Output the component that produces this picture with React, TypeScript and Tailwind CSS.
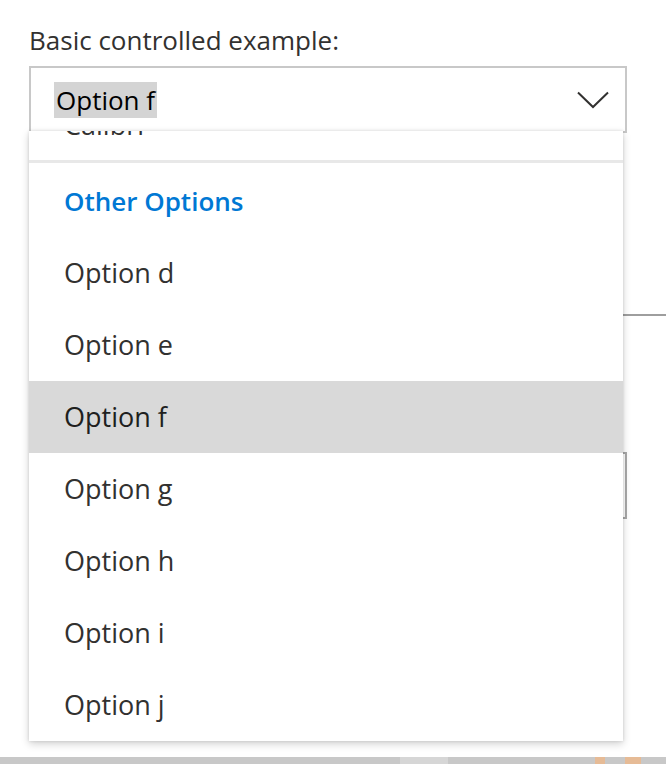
import { useState } from 'react';

const OPTIONS = ['Option d', 'Option e', 'Option f', 'Option g', 'Option h', 'Option i', 'Option j'];

export default function App() {
  const [selected, setSelected] = useState('Option f');

  return (
    <div className="relative h-[764px] w-full overflow-hidden bg-white font-['Open_Sans',sans-serif] text-[#323130]">
      {/* page underneath the callout */}
      <div className="px-[29px] pt-[22px]">
        <label className="block text-[26px] leading-[36px]">Basic controlled example:</label>
        <div className="mt-[8px] flex h-[67px] w-[598px] items-center justify-between border-2 border-[#c8c8c8] pl-[23px] pr-[16px]">
          <span className="bg-[#d4d4d4] px-[2px] text-[26px] leading-[36px] text-black">{selected}</span>
          <svg width="32" height="18" viewBox="0 0 32 18" fill="none">
            <polyline points="1,1.5 16,16 31,1.5" stroke="#323130" strokeWidth="2" />
          </svg>
        </div>
        <div className="-mr-[29px] mt-[181px] h-[2px] bg-[#9e9e9e]" />
        <div className="mt-[136px] h-[67px] w-[598px] border-2 border-[#a8a8a8]" />
        <div className="-mx-[29px] mt-[238px] flex h-[7px] bg-[#c8c8c8]">
          <div className="w-[400px]" />
          <div className="w-[48px] bg-[#d6d6d6]" />
          <div className="w-[147px]" />
          <div className="w-[10px] bg-[#e6bb96]" />
          <div className="w-[20px]" />
          <div className="w-[16px] bg-[#e6bb96]" />
        </div>
      </div>

      {/* dropdown callout */}
      <div className="absolute left-[29px] top-[131px] h-[610px] w-[594px] overflow-hidden bg-white shadow-[0_3px_8px_rgba(0,0,0,0.18),0_0_3px_rgba(0,0,0,0.12)]">
        <div className="-mt-[45px]">
          <div className="flex h-[72px] items-center pl-[35px] pt-[6px] text-[27px]">Calibri</div>
          <div className="my-[2px] h-[3px] bg-[#e8e8e8]" />
          <div className="flex h-[72px] items-center pl-[35px] text-[26px] font-semibold text-[#0078d4]">Other Options</div>
          {OPTIONS.map((o) => (
            <div
              key={o}
              onClick={() => setSelected(o)}
              className={`flex h-[72px] items-center pl-[35px] text-[27px] ${o === selected ? 'bg-[#d9d9d9] text-[#201f1e]' : ''}`}
            >
              {o}
            </div>
          ))}
        </div>
      </div>
    </div>
  );
}
